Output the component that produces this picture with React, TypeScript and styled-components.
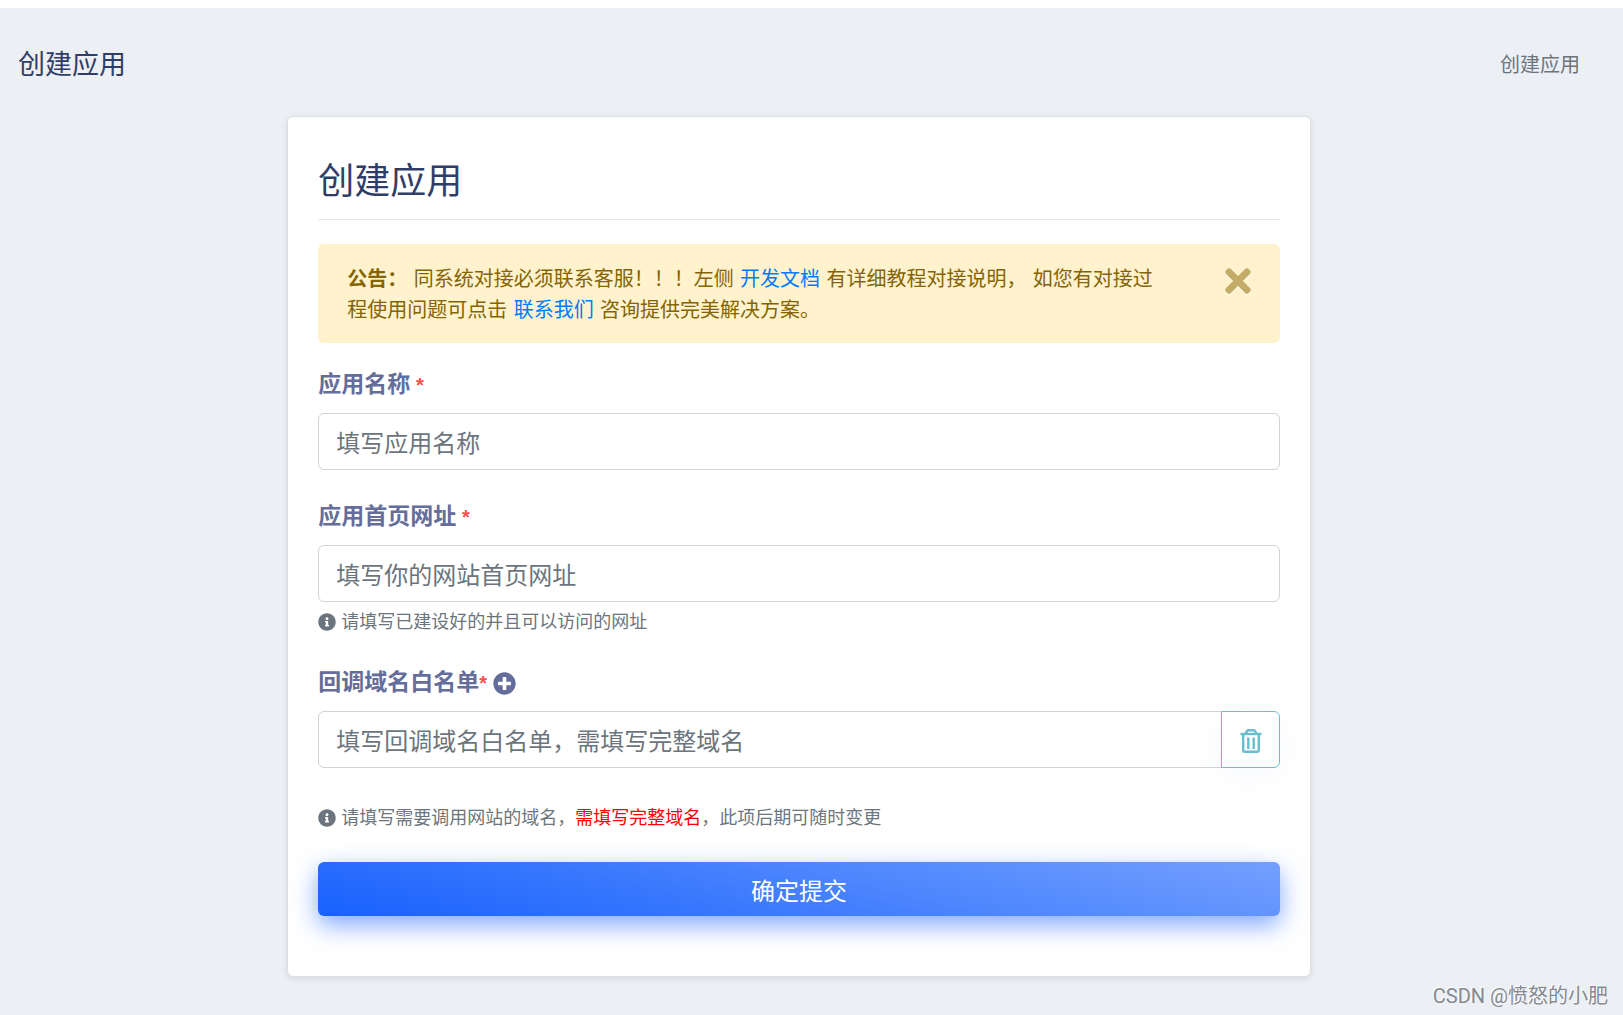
import React from "react";
import styled, { createGlobalStyle } from "styled-components";
import { FaInfoCircle, FaPlusCircle } from "react-icons/fa";

const GlobalStyle = createGlobalStyle`
  *, *::before, *::after { box-sizing: border-box; }
  html { background: #ecf0f5; }
  body {
    margin: 0;
    font-family: Roboto, "Noto Sans CJK SC", sans-serif;
    font-size: 20px;
    color: #303e67;
  }
  h1, h2, p { margin: 0; font-weight: 400; }
  input, button { font-family: inherit; }
`;

const Page = styled.div`
  position: relative;
  min-height: 100vh;
  border-top: 8px solid #ffffff;
  padding: 0 25px 38px 0;
  background: #ecf0f5;
`;

const Header = styled.header`
  display: flex;
  align-items: center;
  justify-content: space-between;
  padding: 37px 18px 31px;
  line-height: 40px;
`;

const PageTitle = styled.h1`
  font-size: 27px;
`;

const Breadcrumb = styled.nav`
  color: #6c757d;
`;

const Columns = styled.main`
  display: grid;
  grid-template-columns: 1fr 4fr 1fr;
`;

const Column = styled.div`
  grid-column: 2;
  padding: 0 21px;
`;

const Card = styled.section`
  padding: 42px 30px 60px;
  background: #ffffff;
  border: 1px solid #dedede;
  border-radius: 6px;
  box-shadow: 0 2px 6px rgba(0, 0, 0, 0.1);
`;

const CardTitle = styled.h2`
  padding-bottom: 14px;
  margin-bottom: 24px;
  border-bottom: 1px solid #e5e6e8;
  font-size: 36px;
  line-height: 46px;
`;

const Notice = styled.div`
  display: flex;
  align-items: flex-start;
  gap: 60px;
  padding: 20px 29px 17px;
  margin-bottom: 24px;
  border-radius: 6px;
  background: #fff2cc;
  color: #856404;
  font-family: "DejaVu Sans", "Noto Sans CJK SC", sans-serif;
  line-height: 31px;
`;

const NoticeText = styled.p`
  flex: 1;
`;

const Link = styled.a`
  color: #007bff;
  text-decoration: none;
`;

const CloseButton = styled.button`
  display: flex;
  padding: 4px 0 0;
  border: 0;
  background: none;
  color: #c3ab68;
  cursor: pointer;

  svg { filter: drop-shadow(0 1px 0 #ffffff); }
`;

const Group = styled.div`
  margin-bottom: 29px;
`;

const LabelRow = styled.div`
  display: flex;
  align-items: center;
  gap: 6px;
  padding-top: 1px;
  margin-bottom: 11px;
  color: #656d9a;
  font-size: 23px;
  line-height: 34px;
`;

const Label = styled.label`
  font-weight: 700;
`;

const Required = styled.span`
  color: #ff4d4d;
  font-family: "Liberation Sans", sans-serif;
  font-size: 20px;
`;

const AddButton = styled.button`
  display: flex;
  padding: 0;
  border: 0;
  background: none;
  color: inherit;
  font-size: 23px;
  cursor: pointer;
`;

const TextInput = styled.input<{ $joined?: boolean }>`
  display: block;
  flex: 1;
  width: 100%;
  min-width: 0;
  height: 57px;
  padding: 4px 17px 0;
  border: 1px solid #ced4da;
  border-radius: ${(p) => (p.$joined ? "6px 0 0 6px" : "6px")};
  background: #ffffff;
  color: #303e67;
  font-size: 24px;

  &::placeholder { color: #6c757d; opacity: 1; }
`;

const InputRow = styled.div`
  display: flex;
  margin-bottom: 36px;
`;

const DeleteButton = styled.button`
  display: flex;
  align-items: center;
  justify-content: center;
  width: 59px;
  margin-left: -1px;
  padding: 2px 0 0 1px;
  border: 1px solid #67bfcd;
  border-radius: 0 6px 6px 0;
  background: #ffffff;
  color: #67bfcd;
  box-shadow: 0 7px 30px rgba(95, 140, 210, 0.05);
  cursor: pointer;
`;

const Help = styled.p<{ $spaced?: boolean }>`
  display: flex;
  align-items: center;
  gap: 5px;
  margin-top: ${(p) => (p.$spaced ? "6px" : "0")};
  color: #6c757d;
  font-size: 18px;
  line-height: 28px;
`;

const Warn = styled.span`
  color: #ff0000;
`;

const Submit = styled.button`
  display: block;
  width: 100%;
  height: 54px;
  margin-top: 30px;
  border: 0;
  border-radius: 6px;
  background: linear-gradient(14deg, #1761fd 0%, rgba(23, 97, 253, 0.6));
  box-shadow: 0 9px 24px 0 rgba(23, 97, 253, 0.55);
  color: #ffffff;
  font-size: 24px;
  cursor: pointer;
`;

const Watermark = styled.div`
  position: absolute;
  right: 15px;
  bottom: 4px;
  color: #85888d;
  line-height: 30px;
  text-shadow: -1px -1px 0 #ffffff;
`;

const CloseIcon = () => (
  <svg width="26" height="26" viewBox="0 0 26 26" fill="currentColor" aria-hidden="true">
    <rect x="-3" y="9.6" width="32" height="6.8" rx="2.6" transform="rotate(45 13 13)" />
    <rect x="-3" y="9.6" width="32" height="6.8" rx="2.6" transform="rotate(-45 13 13)" />
  </svg>
);

const TrashIcon = () => (
  <svg width="22" height="24" viewBox="0 0 22 24" fill="none" stroke="currentColor" strokeWidth="2.4" aria-hidden="true">
    <path d="M0.5 5h21" />
    <path d="M5.5 5l1.3-2.8q.4-1 1.4-1h5.6q1 0 1.4 1l1.3 2.8" />
    <path d="M3.2 5v16q0 1.8 1.3 1.8h13q1.3 0 1.3-1.8V5" />
    <path d="M8.3 8.5v11.5M13.7 8.5v11.5" />
  </svg>
);

export default function App() {
  return (
    <>
      <GlobalStyle />
      <Page lang="zh-CN">
        <Header>
          <PageTitle>创建应用</PageTitle>
          <Breadcrumb>创建应用</Breadcrumb>
        </Header>
        <Columns>
          <Column>
            <Card>
              <CardTitle>创建应用</CardTitle>
              <Notice role="alert">
                <NoticeText>
                  <strong>公告：</strong> 同系统对接必须联系客服！！！左侧 <Link href="#docs">开发文档</Link>{" "}
                  有详细教程对接说明， 如您有对接过程使用问题可点击 <Link href="#contact">联系我们</Link>{" "}
                  咨询提供完美解决方案。
                </NoticeText>
                <CloseButton type="button" aria-label="关闭">
                  <CloseIcon />
                </CloseButton>
              </Notice>
              <form onSubmit={(e) => e.preventDefault()}>
                <Group>
                  <LabelRow>
                    <Label htmlFor="app-name">
                      应用名称 <Required>*</Required>
                    </Label>
                  </LabelRow>
                  <TextInput id="app-name" type="text" placeholder="填写应用名称" />
                </Group>
                <Group>
                  <LabelRow>
                    <Label htmlFor="app-url">
                      应用首页网址 <Required>*</Required>
                    </Label>
                  </LabelRow>
                  <TextInput id="app-url" type="text" placeholder="填写你的网站首页网址" />
                  <Help $spaced>
                    <FaInfoCircle />
                    <span>请填写已建设好的并且可以访问的网址</span>
                  </Help>
                </Group>
                <Group>
                  <LabelRow>
                    <Label htmlFor="app-domain">
                      回调域名白名单<Required>*</Required>
                    </Label>
                    <AddButton type="button" aria-label="添加">
                      <FaPlusCircle />
                    </AddButton>
                  </LabelRow>
                  <InputRow>
                    <TextInput $joined id="app-domain" type="text" placeholder="填写回调域名白名单，需填写完整域名" />
                    <DeleteButton type="button" aria-label="删除">
                      <TrashIcon />
                    </DeleteButton>
                  </InputRow>
                  <Help>
                    <FaInfoCircle />
                    <span>
                      请填写需要调用网站的域名，<Warn>需填写完整域名</Warn>，此项后期可随时变更
                    </span>
                  </Help>
                </Group>
                <Submit type="submit">确定提交</Submit>
              </form>
            </Card>
          </Column>
        </Columns>
        <Watermark>CSDN @愤怒的小肥</Watermark>
      </Page>
    </>
  );
}
